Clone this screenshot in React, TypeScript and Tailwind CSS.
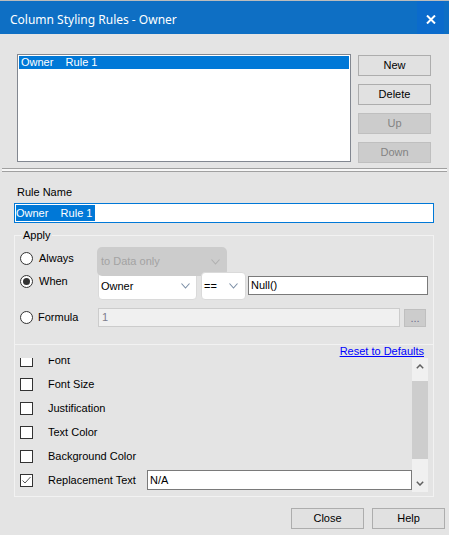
import React from "react";

const Chevron = ({ color = "#7c8fa6", w = 9, h = 5 }: { color?: string; w?: number; h?: number }) => (
  <svg width={w} height={h + 1} viewBox={`0 0 ${w} ${h + 1}`}>
    <polyline points={`0.5,0.5 ${w / 2},${h} ${w - 0.5},0.5`} fill="none" stroke={color} strokeWidth="1.1" />
  </svg>
);

const Btn = ({ label, disabled }: { label: string; disabled?: boolean }) => (
  <div
    className={
      disabled
        ? "w-[73px] h-[21px] border border-[#bfbfbf] bg-[#cccccc] text-[#838383] flex items-center justify-center"
        : "w-[73px] h-[21px] border border-[#adadad] bg-[#e1e1e1] text-black flex items-center justify-center"
    }
  >
    {label}
  </div>
);

const Radio = ({ checked }: { checked?: boolean }) => (
  <div className="w-[13px] h-[13px] rounded-full border border-[#333333] bg-white flex items-center justify-center shrink-0">
    {checked && <div className="w-[7px] h-[7px] rounded-full bg-[#333333]" />}
  </div>
);

const Check = ({ checked }: { checked?: boolean }) => (
  <div className="w-[13px] h-[13px] border border-[#333333] bg-white shrink-0 flex items-center justify-center">
    {checked && (
      <svg width="11" height="11" viewBox="0 0 11 11">
        <polyline points="1.5,5.5 4,8 9.5,2" fill="none" stroke="#555555" strokeWidth="1" />
      </svg>
    )}
  </div>
);

const rows = ["Font", "Font Size", "Justification", "Text Color", "Background Color"];

export default function App() {
  return (
    <div className="w-[449px] h-[535px] bg-[#e4e4e4] overflow-hidden font-['Liberation_Sans',Arial,sans-serif] text-[11px] leading-[13px] text-black">
      <div className="h-px bg-[#bcbcbc]" />
      <div className="h-[33px] bg-[#0e6fc4] flex items-stretch">
        <div className="flex items-center pl-[10px] pt-[3px] text-white text-[12px] font-['Segoe_UI','Noto_Sans',sans-serif]">
          Column Styling Rules - Owner
        </div>
        <div className="ml-auto mr-[5px] w-[27px] bg-[#0b6bcc] flex items-center justify-center pt-[3px]">
          <svg width="10" height="9" viewBox="0 0 10 9">
            <path d="M1 0.5 L9 8.5 M9 0.5 L1 8.5" stroke="white" strokeWidth="2" />
          </svg>
        </div>
      </div>

      <div className="mt-[20px] ml-[17px] flex items-start gap-[7px]">
        <div className="w-[334px] h-[108px] bg-white border border-[#828790] p-px">
          <div className="h-[13px] bg-[#0078d7] text-white pl-[2px] whitespace-pre">Owner    Rule 1</div>
        </div>
        <div className="pt-px flex flex-col gap-[8px]">
          <Btn label="New" />
          <Btn label="Delete" />
          <Btn label="Up" disabled />
          <Btn label="Down" disabled />
        </div>
      </div>

      <div className="mt-[5px] mx-[2px] h-[4px] border-y border-[#a0a0a0] bg-[#f7f7f7]" />

      <div className="mt-[14px] pl-[17px]">Rule Name</div>
      <div className="mt-[4px] ml-[14px] w-[420px] h-[20px] border border-[#0078d7] bg-white flex items-center pl-px">
        <span className="h-[16px] leading-[16px] bg-[#0078d7] text-white whitespace-pre pr-[3px]">Owner    Rule 1</span>
      </div>

      <div className="mt-[12px] ml-[14px] w-[420px] h-[110px] border border-[#f2f2f2] relative pt-[16px]">
        <span className="absolute left-[7px] top-[-7px] px-px bg-[#e4e4e4]">Apply</span>

        <div className="flex items-center h-[13px] pl-[5px]">
          <Radio />
          <span className="ml-[6px]">Always</span>
        </div>

        <div className="mt-[7px] flex items-start h-[28px]">
          <div className="w-[83px] pl-[5px] mt-[3px] flex items-center h-[13px]">
            <Radio checked />
            <span className="ml-[6px]">When</span>
          </div>
          <div className="w-[99px] h-[28px] bg-white border border-[#dadada] rounded-[4px] flex items-center justify-between pl-[2px] pr-[6px]">
            <span>Owner</span>
            <Chevron />
          </div>
          <div className="relative z-20 ml-[4px] w-[45px] h-[28px] bg-white border border-[#dadada] rounded-[4px] flex items-center justify-between pl-[2px] pr-[7px]">
            <span>==</span>
            <Chevron />
          </div>
          <div className="ml-[2px] mt-[4px] w-[180px] h-[19px] border border-[#7a7a7a] bg-white pl-[2px] flex items-center">
            Null()
          </div>
        </div>

        <div className="mt-[8px] flex items-center h-[19px]">
          <div className="w-[83px] pl-[5px] flex items-center h-[13px]">
            <Radio />
            <span className="ml-[5px]">Formula</span>
          </div>
          <div className="w-[302px] h-[19px] bg-[#f0f0f0] border border-[#cccccc] pl-[3px] flex items-center text-[#7d7d8d]">
            1
          </div>
          <div className="ml-[4px] w-[22px] h-[18px] bg-[#cccccc] border border-[#bfbfbf] text-[#6e6e8e] flex items-center justify-center leading-[10px]">
            ...
          </div>
        </div>

        <div className="absolute z-10 left-[82px] top-[11px] w-[130px] h-[29px] bg-[#cccccc] rounded-[5px] flex items-center justify-between pl-[4px] pr-[7px] text-[#a3a3a3]">
          <span>to Data only</span>
          <Chevron color="#b0b0b0" />
        </div>
      </div>

      <div className="ml-[14px] w-[420px] h-[152px] border-x border-b border-[#f2f2f2] flex flex-col">
        <div className="h-[13px] flex justify-end pr-[9px]">
          <span className="text-[#0000ff] underline">Reset to Defaults</span>
        </div>
        <div className="h-[134px] flex">
          <div className="flex-1 overflow-hidden pl-[5px]">
            <div className="mt-[-10px]">
              {rows.map((r) => (
                <div key={r} className="h-[24px] flex items-center">
                  <Check />
                  <span className="ml-[15px]">{r}</span>
                </div>
              ))}
              <div className="h-[24px] flex items-center">
                <Check checked />
                <span className="ml-[15px] w-[99px]">Replacement Text</span>
                <div className="flex-1 h-[20px] border border-[#7a7a7a] bg-white pl-[2px] flex items-center">N/A</div>
              </div>
            </div>
          </div>
          <div className="w-[16px] mr-[5px] bg-[#f0f0f0] flex flex-col">
            <div className="h-[17px] flex items-center justify-center">
              <svg width="8" height="5" viewBox="0 0 8 5">
                <polyline points="0.8,4.2 4,1 7.2,4.2" fill="none" stroke="#606060" strokeWidth="1.5" />
              </svg>
            </div>
            <div className="flex-1">
              <div className="mt-[6px] h-[78px] bg-[#cdcdcd]" />
            </div>
            <div className="h-[17px] flex items-center justify-center">
              <svg width="8" height="5" viewBox="0 0 8 5">
                <polyline points="0.8,0.8 4,4 7.2,0.8" fill="none" stroke="#606060" strokeWidth="1.5" />
              </svg>
            </div>
          </div>
        </div>
      </div>

      <div className="mt-[11px] flex justify-end gap-[8px] pr-[4px]">
        <Btn label="Close" />
        <Btn label="Help" />
      </div>
    </div>
  );
}
